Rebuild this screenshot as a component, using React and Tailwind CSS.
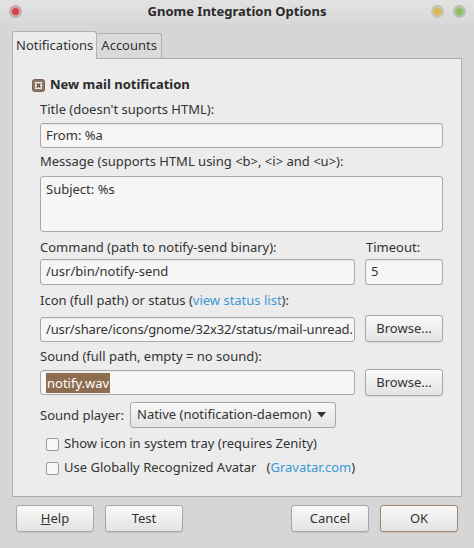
const font = { fontFamily: '"Noto Sans", "Open Sans", sans-serif' }

function Label({ children, className = '' }) {
  return <div className={`h-[18px] leading-[18px] text-[13px] text-[#333] ${className}`}>{children}</div>
}

function Input({ value, className = '', selected = false }) {
  return (
    <div
      className={`flex h-[25px] items-center rounded-[3px] border border-[#a9a9a9] bg-[#f6f6f6] px-[5px] text-[13px] text-[#333] whitespace-nowrap overflow-hidden shadow-[inset_0_1px_1px_rgba(0,0,0,0.06)] ${className}`}
    >
      {selected ? <span className="bg-[#8e6c50] px-px text-white leading-[20px]">{value}</span> : value}
    </div>
  )
}

function Button({ children, className = '' }) {
  return (
    <button
      className={`flex h-[27px] items-center justify-center rounded-[3px] border border-[#a7a7a7] bg-gradient-to-b from-[#f9f9f9] to-[#e3e3e3] text-[13px] text-[#333] shadow-[0_1px_1px_rgba(0,0,0,0.08)] ${className}`}
    >
      {children}
    </button>
  )
}

function Check() {
  return <div className="h-[13px] w-[13px] shrink-0 rounded-[2px] border border-[#9a9a9a] bg-[#f7f7f7]" />
}

function Dot({ color, ring }) {
  return (
    <div className={`flex h-[13px] w-[13px] items-center justify-center rounded-full ${ring}`}>
      <div className={`h-[7px] w-[7px] rounded-full ${color}`} />
    </div>
  )
}

export default function App() {
  return (
    <div style={font} className="flex h-[548px] w-[474px] flex-col bg-[#d6d6d6] text-[#333]">
      <div className="relative flex h-[24px] items-center justify-center bg-gradient-to-b from-[#e2e2e2] to-[#d8d8d8]">
        <div className="absolute left-[9px] top-[5px]">
          <Dot color="bg-[#d6404a]" ring="bg-[#c9a9aa]" />
        </div>
        <span className="text-[13px] font-bold text-[#2a2a2a]">Gnome Integration Options</span>
        <div className="absolute right-[8px] top-[5px] flex gap-[9px]">
          <Dot color="bg-[#d7b84a]" ring="bg-[#c9c3aa]" />
          <Dot color="bg-[#8fc060]" ring="bg-[#b3c3a8]" />
        </div>
      </div>

      <div className="mt-[7px] flex pl-[12px]">
        <div className="relative z-10 -mb-px flex h-[28px] items-center rounded-t-[3px] border border-b-0 border-[#b0b0b0] bg-[#ececec] px-[3px] text-[13px]">
          Notifications
        </div>
        <div className="mt-[2px] flex h-[25px] items-center rounded-t-[3px] border border-b-0 border-l-0 border-[#b0b0b0] bg-[#dadada] px-[4px] text-[13px]">
          Accounts
        </div>
      </div>

      <div className="mx-[12px] flex h-[439px] flex-col border border-[#adadad] bg-[#ececec] pl-[27px] pr-[18px] pt-[17px]">
        <div className="flex h-[18px] items-center gap-[5px]">
          <svg width="13" height="13" viewBox="0 0 13 13" className="-ml-[8px]">
            <rect x="0.5" y="0.5" width="12" height="12" rx="2" fill="#8e7564" stroke="#7a6252" />
            <rect x="3" y="3" width="7" height="7" fill="#ede6e0" />
            <path d="M4.6 4.6 L8.4 8.4 M8.4 4.6 L4.6 8.4" stroke="#5a4a40" strokeWidth="1.4" />
          </svg>
          <span className="text-[13px] font-bold text-[#2a2a2a]">New mail notification</span>
        </div>

        <Label className="mt-[6px]">Title (doesn't suports HTML):</Label>
        <Input value="From: %a" className="mt-[5px]" />

        <Label className="mt-[4px]">Message (supports HTML using &lt;b&gt;, &lt;i&gt; and &lt;u&gt;):</Label>
        <div className="mt-[6px] h-[56px] rounded-[3px] border border-[#a9a9a9] bg-[#f6f6f6] px-[5px] pt-[3px] text-[13px]">
          Subject: %s
        </div>

        <div className="mt-[6px] flex gap-[10px]">
          <Label className="flex-1">Command (path to notify-send binary):</Label>
          <Label className="w-[78px] pl-px">Timeout:</Label>
        </div>
        <div className="mt-[3px] flex gap-[10px]">
          <Input value="/usr/bin/notify-send" className="h-[26px] flex-1" />
          <Input value="5" className="h-[26px] w-[78px]" />
        </div>

        <Label className="mt-[6px]">
          Icon (full path) or status (<span className="text-[#3a98d4]">view status list</span>):
        </Label>
        <div className="mt-[6px] flex h-[27px] items-center gap-[10px]">
          <Input
            value="/usr/share/icons/gnome/32x32/status/mail-unread."
            className="mt-[2px] flex-1 tracking-[-0.15px]"
          />
          <Button className="w-[78px]">Browse...</Button>
        </div>

        <Label className="mt-[5px]">Sound (full path, empty = no sound):</Label>
        <div className="mt-[4px] flex h-[27px] items-center gap-[10px]">
          <Input value="notify.wav" selected className="flex-1" />
          <Button className="w-[78px]">Browse...</Button>
        </div>

        <div className="mt-[6px] flex h-[26px] items-center">
          <Label className="w-[90px]">Sound player:</Label>
          <button className="flex h-[26px] w-[206px] items-center justify-between rounded-[3px] border border-[#a7a7a7] bg-gradient-to-b from-[#f9f9f9] to-[#e3e3e3] pl-[6px] pr-[9px] text-[13px] text-[#333]">
            <span>Native (notification-daemon)</span>
            <svg width="9" height="6" viewBox="0 0 9 6">
              <path d="M0 0 H9 L4.5 5.5 Z" fill="#333" />
            </svg>
          </button>
        </div>

        <div className="mt-[7px] flex h-[18px] items-center gap-[5px] pl-[6px]">
          <Check />
          <span className="text-[13px]">Show icon in system tray (requires Zenity)</span>
        </div>
        <div className="mt-[6px] flex h-[18px] items-center gap-[5px] pl-[6px]">
          <Check />
          <span className="text-[13px] whitespace-pre">
            Use Globally Recognized Avatar   (<span className="text-[#3a98d4]">Gravatar.com</span>)
          </span>
        </div>
      </div>

      <div className="mt-[8px] flex px-[16px]">
        <Button className="w-[78px]">
          <span><u>H</u>elp</span>
        </Button>
        <Button className="ml-[11px] w-[78px]">Test</Button>
        <div className="flex-1" />
        <Button className="w-[78px]">Cancel</Button>
        <Button className="ml-[11px] w-[78px] border-[#a3866a] shadow-[0_0_0_1px_rgba(163,134,106,0.25)]">OK</Button>
      </div>
    </div>
  )
}
